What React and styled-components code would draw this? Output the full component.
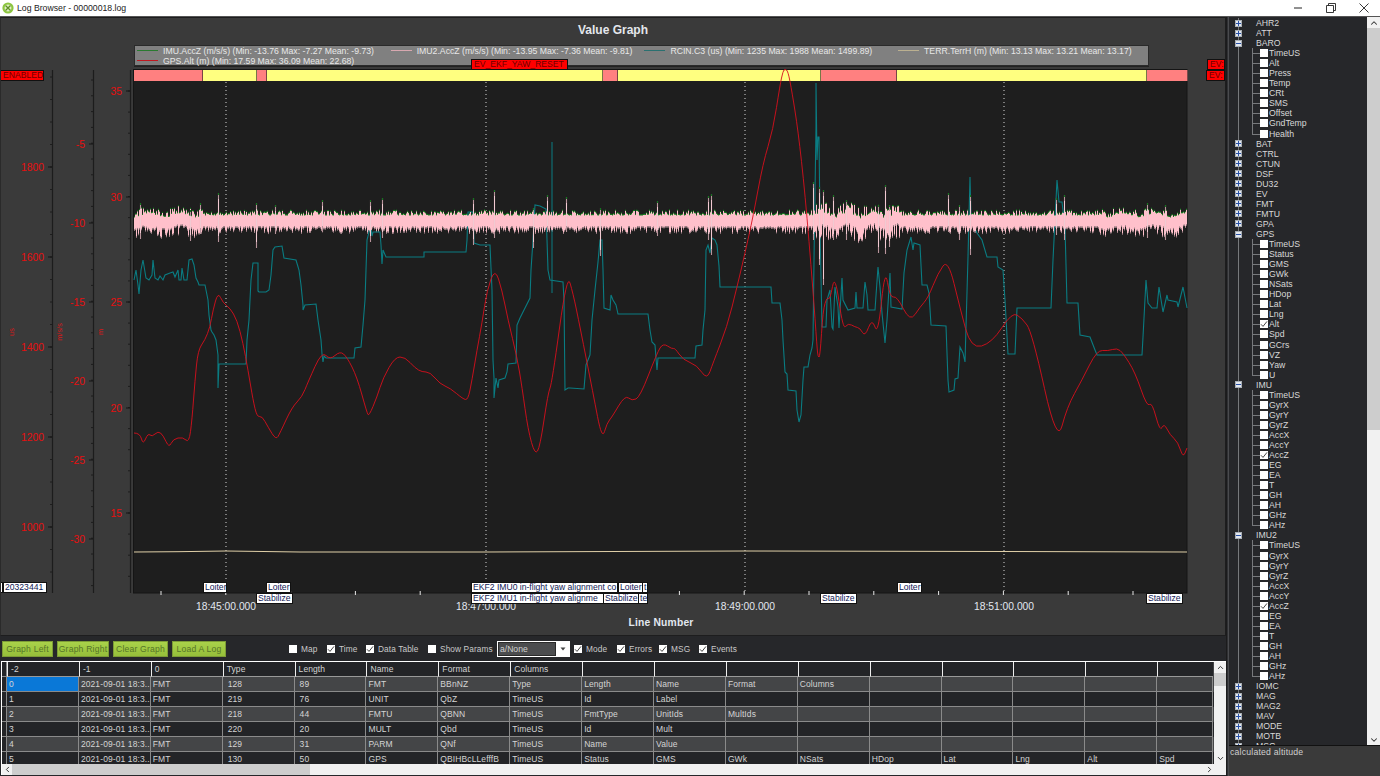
import React from "react";
import styled, { createGlobalStyle } from "styled-components";
import { ChevronUp, ChevronDown, ChevronLeft, ChevronRight } from "lucide-react";

const GlobalStyle = createGlobalStyle`
  html, body {
    margin: 0;
    padding: 0;
    background: #26272a;
    overflow: hidden;
  }
  * { box-sizing: border-box; }
`;

const FONT = `"Liberation Sans", Arial, sans-serif`;

//Data
const IMU_FIELDS = ["TimeUS", "GyrX", "GyrY", "GyrZ", "AccX", "AccY", "AccZ", "EG", "EA", "T", "GH", "AH", "GHz", "AHz"];

const TREE = [
  { name: "AHR2" },
  { name: "ATT" },
  { name: "BARO", fields: ["TimeUS", "Alt", "Press", "Temp", "CRt", "SMS", "Offset", "GndTemp", "Health"] },
  { name: "BAT" },
  { name: "CTRL" },
  { name: "CTUN" },
  { name: "DSF" },
  { name: "DU32" },
  { name: "EV" },
  { name: "FMT" },
  { name: "FMTU" },
  { name: "GPA" },
  { name: "GPS", fields: ["TimeUS", "Status", "GMS", "GWk", "NSats", "HDop", "Lat", "Lng", "Alt", "Spd", "GCrs", "VZ", "Yaw", "U"], checked: "Alt" },
  { name: "IMU", fields: IMU_FIELDS, checked: "AccZ" },
  { name: "IMU2", fields: IMU_FIELDS, checked: "AccZ" },
  { name: "IOMC" },
  { name: "MAG" },
  { name: "MAG2" },
  { name: "MAV" },
  { name: "MODE" },
  { name: "MOTB" },
  { name: "MSG" },
];

const STAMP = "2021-09-01 18:3...";
const HEADERS = ["-2", "-1", "0", "Type", "Length", "Name", "Format", "Columns", "", "", "", "", "", "", "", "", ""];
const ROWS = [
  ["0", STAMP, "FMT", "128", "89", "FMT", "BBnNZ", "Type", "Length", "Name", "Format", "Columns", "", "", "", "", ""],
  ["1", STAMP, "FMT", "219", "76", "UNIT", "QbZ", "TimeUS", "Id", "Label", "", "", "", "", "", "", ""],
  ["2", STAMP, "FMT", "218", "44", "FMTU", "QBNN", "TimeUS", "FmtType", "UnitIds", "MultIds", "", "", "", "", "", ""],
  ["3", STAMP, "FMT", "220", "20", "MULT", "Qbd", "TimeUS", "Id", "Mult", "", "", "", "", "", "", ""],
  ["4", STAMP, "FMT", "129", "31", "PARM", "QNf", "TimeUS", "Name", "Value", "", "", "", "", "", "", ""],
  ["5", STAMP, "FMT", "130", "50", "GPS", "QBIHBcLLefffB", "TimeUS", "Status", "GMS", "GWk", "NSats", "HDop", "Lat", "Lng", "Alt", "Spd"],
];

const LEGEND = [
  { color: "#2a7a30", text: "IMU.AccZ (m/s/s) (Min: -13.76 Max: -7.27 Mean: -9.73)" },
  { color: "#d8a8b0", text: "IMU2.AccZ (m/s/s) (Min: -13.95 Max: -7.36 Mean: -9.81)" },
  { color: "#2a7070", text: "RCIN.C3 (us) (Min: 1235 Max: 1988 Mean: 1499.89)" },
  { color: "#bbb090", text: "TERR.TerrH (m) (Min: 13.13 Max: 13.21 Mean: 13.17)" },
  { color: "#c01820", text: "GPS.Alt (m) (Min: 17.59 Max: 36.09 Mean: 22.68)" },
];

const MODE_BANDS = [
  [134, 202, "#ff8080"], [203, 256, "#ffff80"], [257, 266, "#ff8080"], [267, 602, "#ffff80"],
  [603, 617, "#ff8080"], [618, 820, "#ffff80"], [821, 896, "#ff8080"], [897, 1146, "#ffff80"], [1147, 1187, "#ff8080"],
];

const TAGS = [
  { x: 0, y: 582, w: 3, text: "" },
  { x: 3, y: 582, w: 44, text: "20323441" },
  { x: 203, y: 582, w: 24, text: "Loiter" },
  { x: 266, y: 582, w: 25, text: "Loiter" },
  { x: 256, y: 593, w: 37, text: "Stabilize" },
  { x: 471, y: 582, w: 147, text: "EKF2 IMU0 in-flight yaw alignment co" },
  { x: 471, y: 593, w: 133, text: "EKF2 IMU1 in-flight yaw alignme" },
  { x: 642, y: 582, w: 6, text: "t" },
  { x: 618, y: 582, w: 25, text: "Loiter" },
  { x: 638, y: 593, w: 10, text: "te" },
  { x: 603, y: 593, w: 36, text: "Stabilize" },
  { x: 820, y: 593, w: 37, text: "Stabilize" },
  { x: 897, y: 582, w: 25, text: "Loiter" },
  { x: 1146, y: 593, w: 37, text: "Stabilize" },
];

const TEAL = [
  134,280, 136,270, 138,285, 139,294, 141,270, 143,260, 146,278, 149,280, 152,275, 153,260, 155,278, 158,280, 160,276, 163,280,
  165,275, 170,273, 173,272, 175,277, 178,270, 179,280, 181,280, 182,268, 184,280, 187,280, 188,270, 189,260, 192,259, 194,265,
  196,278, 198,282, 199,285, 203,285, 205,285, 206,290, 208,300, 209,315, 211,330, 212,332, 214,335, 216,340, 218,355, 218,388,
  219,364, 220,364, 246,364, 247,340, 249,320, 251,280, 253,263, 255,263, 258,263, 258,291, 259,292, 266,292, 269,290, 271,275,
  273,250, 275,247, 282,246, 284,258, 296,260, 299,270, 301,285, 303,305, 303,310, 305,305, 316,304, 318,320, 321,340, 322,354,
  323,362, 324,356, 326,358, 354,358, 355,348, 361,347, 363,325, 365,300, 366,270, 367,240, 369,232, 370,220, 372,236, 373,232,
  380,232, 381,245, 382,264, 383,250, 386,257, 424,257, 424,252, 466,252, 467,240, 468,212, 473,212, 474,243, 480,245, 490,245,
  491,268, 492,290, 493,360, 494,378, 494,398, 496,378, 498,388, 499,380, 505,378, 507,372, 508,364, 516,363, 517,325, 520,318,
  530,298, 531,270, 533,240, 535,205, 540,206, 546,209, 548,270, 550,280, 563,282, 564,300, 565,390, 568,388, 570,388, 584,389,
  586,365, 590,355, 592,320, 595,290, 598,262, 600,240, 602,240, 603,270, 604,308, 610,310, 611,295, 613,300, 616,305, 618,314,
  648,314, 650,330, 652,342, 655,345, 656,358, 657,370, 658,358, 695,358, 696,346, 702,345, 703,330, 705,310, 706,250, 708,245,
  710,253, 712,238, 715,240, 717,245, 719,266, 720,287, 771,287, 772,303, 780,303, 782,320, 783,340, 785,372, 787,374, 788,390,
  796,391, 797,410, 799,422, 801,415, 803,380, 804,367, 808,367, 810,355, 812,348, 813,340, 814,260, 816,127, 816,83, 817,160,
  818,137, 819,137, 820,227, 821,277, 822,327, 826,327, 827,300, 830,290, 832,327, 833,329, 835,287, 838,307, 839,328, 842,278,
  843,300, 848,310, 855,308, 856,292, 857,308, 863,308, 865,282, 867,295, 868,310, 875,310, 878,267, 880,287, 882,313, 885,343,
  887,320, 890,273, 891,307, 902,309, 904,273, 907,250, 911,237, 913,250, 914,243, 920,245, 922,285, 927,285, 929,293, 931,325,
  946,326, 948,380, 949,392, 954,390, 955,379, 958,378, 960,347, 963,353, 965,362, 966,327, 968,257, 970,177, 971,220, 977,233,
  982,240, 987,257, 997,257, 998,267, 1003,270, 1005,300, 1008,354, 1015,354, 1017,308, 1051,308, 1053,260, 1057,180, 1059,202,
  1062,202, 1065,227, 1067,303, 1078,303, 1080,335, 1090,337, 1095,350, 1097,355, 1142,355, 1143,337, 1146,280, 1148,303, 1152,308,
  1157,308, 1159,287, 1163,312, 1167,295, 1168,300, 1177,302, 1178,307, 1183,287, 1187,308,
];

const RED = [
  134,433, 140,433, 143,445, 148,433, 152,437, 158,431, 163,435, 169,448, 173,439, 183,437, 189,443, 192,420, 195,380, 198,350,
  205,340, 210,327, 213,310, 218,292, 223,303, 230,308, 237,320, 243,343, 248,370, 253,400, 257,417, 262,416, 268,427, 276,440,
  280,433, 292,407, 302,397, 308,382, 322,351, 330,360, 340,351, 347,357, 357,377, 367,413, 369,416, 377,397, 383,378, 395,357,
  405,357, 415,368, 422,372, 430,372, 440,384, 450,388, 463,399, 468,400, 472,380, 477,350, 482,323, 487,290, 495,268, 502,290,
  508,320, 517,357, 522,387, 528,430, 535,455, 540,447, 548,393, 552,383, 567,273, 573,293, 580,327, 593,393, 602,440, 607,423,
  612,417, 625,395, 632,401, 640,397, 657,353, 663,343, 672,349, 675,348, 683,360, 697,365, 707,380, 713,363, 727,327, 737,287,
  745,253, 753,217, 763,163, 773,130, 780,85, 783,71, 785,69, 788,71, 792,92, 798,130, 805,193, 813,290, 817,347, 818,357, 820,357,
  823,310, 827,297, 830,300, 835,273, 843,330, 848,323, 855,327, 860,328, 865,337, 872,318, 878,336, 885,267, 890,298, 897,296,
  910,322, 920,307, 928,298, 938,273, 948,259, 960,308, 971,349, 992,343, 1012,312, 1022,318, 1032,332, 1057,445, 1067,407,
  1082,380, 1097,350, 1108,351, 1117,348, 1123,353, 1135,372, 1147,407, 1152,402, 1160,432, 1164,423, 1170,435, 1178,442, 1183,458, 1187,448,
];

const SPIKES = [
  [140, 203, 239], [190, 210, 241], [200, 203, 234], [218, 193, 242], [256, 203, 248], [275, 205, 234], [322, 200, 232], [370, 200, 242],
  [382, 198, 238], [473, 198, 245], [494, 190, 238], [533, 208, 248], [547, 195, 232], [566, 197, 232], [600, 208, 256], [657, 201, 236],
  [708, 196, 240], [711, 194, 255], [813, 182, 240], [819, 187, 265], [823, 190, 285], [833, 195, 240], [846, 200, 240], [878, 205, 253],
  [885, 185, 254], [889, 205, 247], [948, 193, 232], [959, 205, 240], [970, 195, 255], [1056, 198, 235], [1064, 195, 240], [1147, 203, 238], [1165, 205, 240],
];

const toPath = (pts) => {
  let d = "";
  for (let i = 0; i < pts.length; i += 2) d += (i ? "L" : "M") + pts[i] + " " + pts[i + 1];
  return d;
};

const toSmoothPath = (pts) => {
  let d = `M${pts[0]} ${pts[1]}`;
  for (let i = 2; i < pts.length - 2; i += 2) {
    const midX = (pts[i] + pts[i + 2]) / 2;
    const midY = (pts[i + 1] + pts[i + 3]) / 2;
    d += `Q${pts[i]} ${pts[i + 1]} ${midX} ${midY}`;
  }
  return d + `L${pts[pts.length - 2]} ${pts[pts.length - 1]}`;
};

const buildNoise = () => {
  let seed = 18;
  const rnd = () => {
    seed = (seed * 16807) % 2147483647;
    return seed / 2147483647;
  };
  let pink = "";
  let green = "";
  let shadow = "";
  for (let x = 134.5; x < 1187; x += 1) {
    let amp = 1;
    let drift = 0;
    if (x < 200 || x > 1100) {
      amp = 1.5;
      drift = Math.sin(x / 5) * 2;
    }
    if (x > 813 && x < 900) {
      amp = 2.2;
      drift = Math.sin(x / 4) * 3;
    }
    const up = rnd();
    const down = rnd();
    const top = 215.5 + drift - up * up * 5 * amp;
    const bottom = 226 + drift + down * down * 6.5 * amp;
    pink += `M${x} ${top.toFixed(1)}V${bottom.toFixed(1)}`;
    green += `M${x} ${(top - 1.2).toFixed(1)}V${(top + 1).toFixed(1)}`;
    shadow += `M${x} ${(top + 1).toFixed(1)}V${(bottom + 1.6).toFixed(1)}`;
  }
  return { pink, green, shadow };
};

const NOISE = buildNoise();

const range = (from, to, step) => {
  const out = [];
  for (let v = from; v <= to; v += step) out.push(v);
  return out;
};

const AXES = [
  { x: 52, labels: [[167, "1800"], [257, "1600"], [347, "1400"], [437, "1200"], [527, "1000"]], minor: range(77, 592, 22.5) },
  { x: 93, labels: [[144, "-5"], [223, "-10"], [302, "-15"], [381, "-20"], [460, "-25"], [539, "-30"]], minor: range(80, 592, 15.8) },
  { x: 130, labels: [[91, "35"], [197, "30"], [302, "25"], [408, "20"], [513, "15"]], minor: range(91, 592, 21.1) },
];

const UNITS = [[12, "us"], [60, "m/s/s"], [101, "m"]];
const TIMES = [[226, "18:45:00.000"], [486, "18:47:00.000"], [745, "18:49:00.000"], [1004, "18:51:00.000"]];

//Window chrome
const Page = styled.div`
  width: 1380px;
  height: 776px;
  display: flex;
  flex-direction: column;
  font-family: ${FONT};
  background: #26272a;
  overflow: hidden;
`;

const TitleBar = styled.div`
  height: 17px;
  flex: none;
  display: flex;
  align-items: center;
  background: #fff;
  border-bottom: 1px solid #555;
  padding-left: 2px;
  color: #222;
  font-size: 8.7px;
`;

const TitleText = styled.span`
  margin-left: 3px;
  flex: 1;
`;

const WinButton = styled.div`
  width: 33px;
  height: 16px;
  display: flex;
  align-items: center;
  justify-content: center;
`;

const Body = styled.div`
  flex: 1;
  display: flex;
  min-height: 0;
`;

const LeftColumn = styled.div`
  width: 1226px;
  flex: none;
  display: flex;
  flex-direction: column;
`;

const Splitter = styled.div`
  width: 3px;
  flex: none;
  background: #2f3033;
  border-left: 1px solid #1b1b1c;
  border-right: 1px solid #4a4b4e;
`;

//Chart
const ChartPanel = styled.div`
  position: relative;
  height: 619px;
  flex: none;
  background: #3a3a3a;
  border: 1px solid #1d1d1e;
  border-left-color: #2a2a2a;
  overflow: hidden;
`;

const ChartTitle = styled.div`
  height: 26px;
  padding-top: 5px;
  text-align: center;
  color: #e4e7ec;
  font-size: 12px;
  font-weight: 700;
  line-height: 14px;
`;

const ChartSvg = styled.svg`
  display: block;
  width: 1224px;
  height: 591px;
  font-family: ${FONT};
`;

const Legend = styled.div`
  position: absolute;
  left: 133px;
  top: 27px;
  width: 1015px;
  height: 21px;
  display: grid;
  grid-template-columns: repeat(4, 253.7px);
  grid-auto-rows: 10px;
  background: #808080;
  border: 1px solid #2a2a2a;
  box-shadow: 0 1px 0 #222;
  padding-left: 2px;
`;

const LegendItem = styled.div`
  display: flex;
  align-items: center;
  margin-top: -1px;
  color: #e8e8e8;
  font-size: 8.7px;
  line-height: 10px;
  white-space: nowrap;
`;

const LegendLine = styled.span`
  width: 21px;
  height: 1px;
  margin-right: 5px;
  flex: none;
  background: ${(p) => p.$color};
`;

const EventTag = styled.div`
  position: absolute;
  left: ${(p) => p.$x - 1}px;
  top: ${(p) => p.$y - 18}px;
  width: ${(p) => p.$w}px;
  height: 11px;
  overflow: hidden;
  background: #ff0000;
  border: 1px solid #111;
  color: #6e0000;
  font-size: 8.6px;
  line-height: 9px;
  white-space: nowrap;
  padding-left: 2px;
`;

const LabelTag = styled.div`
  position: absolute;
  left: ${(p) => p.$x - 1}px;
  top: ${(p) => p.$y - 18}px;
  width: ${(p) => p.$w}px;
  height: 11px;
  overflow: hidden;
  background: #fff;
  border: 1px solid #111;
  color: #111a55;
  font-size: 8.6px;
  line-height: 9px;
  white-space: nowrap;
  padding-left: 1px;
`;

//Toolbar
const ToolBar = styled.div`
  height: 25px;
  flex: none;
  display: flex;
  align-items: flex-start;
  padding: 5px 0 0 2px;
  background: #26272a;
`;

const GreenButton = styled.div`
  width: ${(p) => p.$w}px;
  height: 16px;
  margin-right: 4px;
  flex: none;
  display: flex;
  align-items: center;
  justify-content: center;
  background: linear-gradient(#a9d24a, #96bf3a);
  border: 1px solid #7d9c36;
  color: #557528;
  font-size: 8.6px;
  letter-spacing: 0.2px;
`;

const CheckRow = styled.div`
  display: flex;
  align-items: center;
  height: 16px;
  margin-left: ${(p) => p.$gap || 0}px;
`;

const CheckItem = styled.label`
  width: ${(p) => p.$w}px;
  flex: none;
  display: flex;
  align-items: center;
  color: #c9c9c9;
  font-size: 8.3px;
  letter-spacing: 0.1px;
  white-space: nowrap;
`;

const Box = styled.span`
  width: 8px;
  height: 8px;
  flex: none;
  display: flex;
  align-items: center;
  justify-content: center;
  background: #fff;
  margin-right: ${(p) => p.$gap ?? 4}px;
`;

const Combo = styled.div`
  width: 73px;
  height: 16px;
  margin-right: 4px;
  flex: none;
  display: flex;
  align-items: stretch;
  background: #fff;
  padding: 1px;
  font-size: 8.6px;
  color: #d0d0d0;
`;

const ComboValue = styled.div`
  flex: 1;
  background: #4b4c4e;
  border: 1px solid #2a2a2a;
  line-height: 12px;
  padding-left: 1px;
`;

const ComboButton = styled.div`
  width: 13px;
  display: flex;
  align-items: center;
  justify-content: center;
`;

//Table
const TableFrame = styled.div`
  flex: 1;
  min-height: 0;
  margin: 0 0 1px 1px;
  background: #f0f0f0;
  border-top: 1px solid #fff;
  border-left: 1px solid #fff;
  display: grid;
  grid-template-columns: 1fr 12px;
  grid-template-rows: 102px 11px;
  overflow: hidden;
`;

const GridArea = styled.div`
  overflow: hidden;
  background: #26272a;
  color: #d4d4d4;
  font-size: 8.5px;
  letter-spacing: 0.1px;
`;

const GridRow = styled.div`
  display: grid;
  grid-template-columns: 5px repeat(16, 71.9px) 56px;
  height: 15px;
  background: ${(p) => (p.$odd ? "#232427" : "#444547")};
`;

const RowHead = styled.div`
  background: #232427;
  border-right: 1px solid #8a8a8a;
  border-bottom: 1px solid #8a8a8a;
`;

const HeadCell = styled.div`
  background: #232427;
  border-left: 1px solid #eee;
  border-bottom: 1px solid #999;
  padding-left: 3px;
  line-height: 14px;
`;

const Cell = styled.div`
  overflow: hidden;
  white-space: nowrap;
  border-right: 1px solid #8a8a8a;
  border-bottom: 1px solid #8a8a8a;
  padding-left: ${(p) => p.$pad || 2}px;
  line-height: 14px;
  background: ${(p) => (p.$selected ? "#0a78d7" : "transparent")};
`;

const ScrollV = styled.div`
  display: flex;
  flex-direction: column;
  align-items: center;
  height: 100%;
  width: ${(p) => p.$w || 12}px;
  background: #f1f1f1;
  color: #333;
`;

const ScrollH = styled.div`
  display: flex;
  align-items: center;
  background: #f1f1f1;
  color: #333;
`;

const ArrowSlot = styled.div`
  flex: none;
  width: ${(p) => (p.$h ? "10px" : "100%")};
  height: ${(p) => (p.$h ? "100%" : "11px")};
  display: flex;
  align-items: center;
  justify-content: center;
`;

const Thumb = styled.div`
  background: #cdcdcd;
  flex: none;
  width: ${(p) => (p.$w ? `${p.$w}px` : "100%")};
  height: ${(p) => (p.$h ? `${p.$h}px` : "100%")};
`;

const Gap = styled.div`
  flex: 1;
`;

//Tree
const RightColumn = styled.div`
  flex: 1;
  min-width: 0;
  display: flex;
  flex-direction: column;
`;

const TreeWrap = styled.div`
  height: 729px;
  flex: none;
  display: flex;
  border-bottom: 1px solid #111;
`;

const TreePane = styled.div`
  flex: 1;
  overflow: hidden;
  padding-top: 1px;
  background: #26272a;
  color: #d8d8d8;
  font-size: 8.7px;
`;

const TreeRow = styled.div`
  position: relative;
  height: 10.05px;
  display: flex;
  align-items: center;
  line-height: 10px;
  white-space: nowrap;
  &::before {
    content: "";
    position: absolute;
    left: 9px;
    top: 0;
    bottom: 0;
    width: 1px;
    background: #77797c;
  }
`;

const Expander = styled.span`
  position: relative;
  z-index: 1;
  width: 7px;
  height: 7px;
  margin: 0 14px 0 6px;
  flex: none;
  background: #e4e8ee;
  border: 1px solid #a8aeb6;
  &::before {
    content: "";
    position: absolute;
    left: 0;
    right: 0;
    top: 2px;
    height: 1px;
    background: #2850a8;
  }
  &::after {
    content: "";
    display: ${(p) => (p.$open ? "none" : "block")};
    position: absolute;
    top: 0;
    bottom: 0;
    left: 2px;
    width: 1px;
    background: #2850a8;
  }
`;

const Branch = styled.span`
  position: relative;
  width: 8px;
  height: 100%;
  margin-left: 23px;
  flex: none;
  &::before {
    content: "";
    position: absolute;
    left: 0;
    top: 0;
    height: ${(p) => (p.$last ? "50%" : "100%")};
    width: 1px;
    background: #77797c;
  }
  &::after {
    content: "";
    position: absolute;
    left: 0;
    right: 0;
    top: 50%;
    height: 1px;
    background: #77797c;
  }
`;

const Description = styled.div`
  flex: 1;
  background: #3a3a3a;
  color: #cfcfcf;
  font-size: 8.7px;
  letter-spacing: 0.2px;
  padding: 1px 1px;
  line-height: 11px;
`;

function Tick() {
  return (
    <svg width="8" height="8" viewBox="0 0 8 8">
      <path d="M1 4.3 L3 6.4 L7 1.4" fill="none" stroke="#333" strokeWidth="0.9" />
    </svg>
  );
}

function AppIcon() {
  return (
    <svg width="12" height="12" viewBox="0 0 12 12">
      <circle cx="6" cy="6" r="5.6" fill="#8cc63f" />
      <circle cx="6" cy="6" r="3.4" fill="#dff0c0" />
      <path d="M3.5 3.5 L8.5 8.5 M8.5 3.5 L3.5 8.5" stroke="#5f8f28" strokeWidth="1.3" />
    </svg>
  );
}

function WindowControls() {
  return (
    <>
      <WinButton>
        <svg width="10" height="10" viewBox="0 0 10 10">
          <path d="M1 5 H9" stroke="#222" strokeWidth="1" />
        </svg>
      </WinButton>
      <WinButton>
        <svg width="10" height="10" viewBox="0 0 10 10">
          <path d="M0.5 2.5 H7.5 V9.5 H0.5 Z M2.5 2.5 V0.5 H9.5 V7.5 H7.5" fill="none" stroke="#222" strokeWidth="0.9" />
        </svg>
      </WinButton>
      <WinButton>
        <svg width="10" height="10" viewBox="0 0 10 10">
          <path d="M0.5 0.5 L9.5 9.5 M9.5 0.5 L0.5 9.5" stroke="#222" strokeWidth="0.9" />
        </svg>
      </WinButton>
    </>
  );
}

function Plot() {
  return (
    <ChartSvg viewBox="1 44 1224 591">
      {AXES.map((axis) => (
        <g key={axis.x}>
          <line x1={axis.x + 0.5} x2={axis.x + 0.5} y1="70" y2="593" stroke="#1c1c1c" strokeWidth="1.2" />
          {axis.minor.map((y) => (
            <line key={y} x1={axis.x - 2} x2={axis.x} y1={y} y2={y} stroke="#151515" strokeWidth="0.8" />
          ))}
          {axis.labels.map(([y, text]) => (
            <g key={text}>
              <line x1={axis.x - 4} x2={axis.x} y1={y} y2={y} stroke="#151515" />
              <text x={axis.x - 8} y={y + 4} textAnchor="end" fontSize="10.4" fill="#e60f0f">
                {text}
              </text>
            </g>
          ))}
        </g>
      ))}
      {UNITS.map(([x, text]) => (
        <text key={text} transform={`translate(${x + 2} 332) rotate(-90)`} textAnchor="middle" fontSize="7.4" fill="#d81818">
          {text}
        </text>
      ))}

      <rect x="133.5" y="69.5" width="1053.5" height="523.5" fill="#1e1e1e" stroke="#151515" />
      {MODE_BANDS.map(([from, to, color]) => (
        <rect key={from} x={from} y="70" width={to - from + 0.4} height="11" fill={color} />
      ))}

      {TIMES.map(([x]) => (
        <line key={x} x1={x} x2={x} y1="82" y2="593" stroke="#d8d8d8" strokeWidth="1" strokeDasharray="1 3" />
      ))}
      {range(161, 1187, 64.8).map((x) => (
        <line key={x} x1={x} x2={x} y1="591" y2="595" stroke="#e8e8e8" strokeWidth="1" />
      ))}
      {TIMES.map(([x, text]) => (
        <text key={text} x={x} y="609.5" textAnchor="middle" fontSize="10.3" fill="#e2e8f0">
          {text}
        </text>
      ))}
      <text x="661" y="626" textAnchor="middle" fontSize="10.3" fontWeight="700" letterSpacing="0.2" fill="#e2e8f0">
        Line Number
      </text>

      <path d="M134 552L178 551.7L226 551L300 552L486 552L745 551L1004 551.5L1187 552" fill="none" stroke="#e0d0a8" strokeWidth="1" />
      <path d={NOISE.shadow} stroke="#9a7c82" strokeWidth="1" />
      <path d={NOISE.green} stroke="#127a1e" strokeWidth="1" />
      <path d={toPath(TEAL)} fill="none" stroke="#0a7c82" strokeWidth="1.1" />
      <path d="M552 142V293" stroke="#0a7c82" strokeWidth="1" />
      <path d={NOISE.pink} stroke="#ffc0cb" strokeWidth="1" />
      {SPIKES.map(([x, top, bottom]) => (
        <g key={x}>
          <line x1={x + 0.5} x2={x + 0.5} y1={top} y2={bottom} stroke="#b8949c" strokeWidth="1.1" />
          <line x1={x + 0.5} x2={x + 0.5} y1={top + 6} y2={bottom - 6} stroke="#ffd8e0" strokeWidth="0.8" />
          <line x1={x + 0.5} x2={x + 0.5} y1={top} y2={top + 2} stroke="#127a1e" strokeWidth="1" />
        </g>
      ))}
      <path d={toSmoothPath(RED)} fill="none" stroke="#d80f1c" strokeWidth="0.9" />
    </ChartSvg>
  );
}

function Chart() {
  return (
    <ChartPanel>
      <ChartTitle>Value Graph</ChartTitle>
      <Plot />
      <Legend>
        {LEGEND.map((item) => (
          <LegendItem key={item.text}>
            <LegendLine $color={item.color} />
            {item.text}
          </LegendItem>
        ))}
      </Legend>
      <EventTag $x={0} $y={70} $w={44}>
        ENABLED
      </EventTag>
      <EventTag $x={471} $y={59} $w={97}>
        EV_EKF_YAW_RESET
      </EventTag>
      <EventTag $x={1207} $y={59} $w={18}>
        EV:
      </EventTag>
      <EventTag $x={1206} $y={70} $w={19}>
        EV:
      </EventTag>
      {TAGS.map((tag) => (
        <LabelTag key={tag.x + tag.text} $x={tag.x} $y={tag.y} $w={tag.w}>
          {tag.text}
        </LabelTag>
      ))}
    </ChartPanel>
  );
}

function Check({ label, w, checked }) {
  return (
    <CheckItem $w={w}>
      <Box>{checked && <Tick />}</Box>
      {label}
    </CheckItem>
  );
}

function Controls() {
  return (
    <ToolBar>
      <GreenButton $w={51}>Graph Left</GreenButton>
      <GreenButton $w={52}>Graph Right</GreenButton>
      <GreenButton $w={55}>Clear Graph</GreenButton>
      <GreenButton $w={54}>Load A Log</GreenButton>
      <CheckRow $gap={59}>
        <Check label="Map" w={38} />
        <Check label="Time" w={39} checked />
        <Check label="Data Table" w={62} checked />
        <Check label="Show Params" w={69} />
        <Combo>
          <ComboValue>a/None</ComboValue>
          <ComboButton>
            <svg width="6" height="4" viewBox="0 0 6 4">
              <path d="M0.5 0.5 H5.5 L3 3.5 Z" fill="#444" />
            </svg>
          </ComboButton>
        </Combo>
        <Check label="Mode" w={43} checked />
        <Check label="Errors" w={42} checked />
        <Check label="MSG" w={40} checked />
        <Check label="Events" w={50} checked />
      </CheckRow>
    </ToolBar>
  );
}

function DataTable() {
  return (
    <TableFrame>
      <GridArea>
        <GridRow>
          <RowHead />
          {HEADERS.map((text, i) => (
            <HeadCell key={i}>{text}</HeadCell>
          ))}
        </GridRow>
        {ROWS.map((row, r) => (
          <GridRow key={r} $odd={r % 2 === 1}>
            <RowHead />
            {row.map((text, c) => (
              <Cell key={c} $selected={r === 0 && c === 0} $pad={c === 3 || c === 4 ? 5 : 2}>
                {text}
              </Cell>
            ))}
          </GridRow>
        ))}
      </GridArea>
      <ScrollV>
        <ArrowSlot>
          <ChevronUp size={9} strokeWidth={2.5} />
        </ArrowSlot>
        <Thumb $h={13} />
        <Gap />
        <ArrowSlot>
          <ChevronDown size={9} strokeWidth={2.5} />
        </ArrowSlot>
      </ScrollV>
      <ScrollH>
        <ArrowSlot $h>
          <ChevronLeft size={9} strokeWidth={2.5} />
        </ArrowSlot>
        <Thumb $w={298} />
        <Gap />
        <ArrowSlot $h>
          <ChevronRight size={9} strokeWidth={2.5} />
        </ArrowSlot>
      </ScrollH>
      <ScrollH />
    </TableFrame>
  );
}

function Tree() {
  return (
    <TreePane>
      {TREE.map((group) => (
        <React.Fragment key={group.name}>
          <TreeRow>
            <Expander $open={!!group.fields} />
            {group.name}
          </TreeRow>
          {(group.fields || []).map((field, i) => (
            <TreeRow key={field}>
              <Branch $last={i === group.fields.length - 1} />
              <Box $gap={1}>{group.checked === field && <Tick />}</Box>
              {field}
            </TreeRow>
          ))}
        </React.Fragment>
      ))}
    </TreePane>
  );
}

export default function App() {
  return (
    <Page>
      <GlobalStyle />
      <TitleBar>
        <AppIcon />
        <TitleText>Log Browser - 00000018.log</TitleText>
        <WindowControls />
      </TitleBar>
      <Body>
        <LeftColumn>
          <Chart />
          <Controls />
          <DataTable />
        </LeftColumn>
        <Splitter />
        <RightColumn>
          <TreeWrap>
            <Tree />
            <ScrollV $w={13}>
              <ArrowSlot>
                <ChevronUp size={10} strokeWidth={2.5} />
              </ArrowSlot>
              <Thumb $h={402} />
              <Gap />
              <ArrowSlot>
                <ChevronDown size={10} strokeWidth={2.5} />
              </ArrowSlot>
            </ScrollV>
          </TreeWrap>
          <Description>calculated altitude</Description>
        </RightColumn>
      </Body>
    </Page>
  );
}
